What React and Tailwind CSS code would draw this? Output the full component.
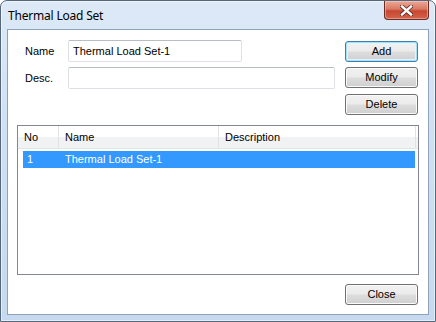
import React from "react";

function WinButton({ children, isDefault = false }) {
  return (
    <div
      className={
        "w-[73px] h-[21px] rounded-[3px] border flex items-center justify-center text-[11px] leading-none text-black bg-[linear-gradient(to_bottom,#f2f2f2_0%,#ebebeb_48%,#dddddd_52%,#cfcfcf_100%)] " +
        (isDefault
          ? "border-[#3c7fb1] shadow-[inset_0_0_0_1px_#a6e0f7,inset_0_0_0_2px_#e1f3fb]"
          : "border-[#707070] shadow-[inset_0_0_0_1px_#fbfbfb]")
      }
    >
      {children}
    </div>
  );
}

export default function App() {
  return (
    <div className="w-[436px] h-[322px] bg-white font-['Liberation_Sans',sans-serif] text-[11px] text-black">
      <div className="w-full h-full flex flex-col rounded-t-[7px] border border-[#55677d] bg-[linear-gradient(to_bottom,#dde9f7_0%,#cfe0f3_40%,#c6d9ef_100%)] shadow-[inset_0_0_0_1px_rgba(255,255,255,0.55)]">
        <div className="h-[28px] shrink-0 flex items-start justify-between">
          <div className="pl-[7px] pt-[7px] text-[12px] leading-[15px] font-['Noto_Sans',sans-serif] tracking-[-0.2px]">
            Thermal Load Set
          </div>
          <div className="mr-[6px] w-[45px] h-[19px] rounded-b-[4px] border border-t-0 border-[#6b2a22] bg-[linear-gradient(to_bottom,#e9a897_0%,#d97a64_45%,#c8462e_55%,#d2644b_100%)] shadow-[inset_0_0_0_1px_rgba(255,220,210,0.45)] flex items-center justify-center">
            <svg width="13" height="11" viewBox="0 0 13 11">
              <path
                d="M2 1.5 L11 9.5 M11 1.5 L2 9.5"
                stroke="#5a2a24"
                strokeWidth="4"
                strokeLinecap="square"
              />
              <path
                d="M2 1.5 L11 9.5 M11 1.5 L2 9.5"
                stroke="#ffffff"
                strokeWidth="2.4"
                strokeLinecap="square"
              />
            </svg>
          </div>
        </div>
        <div className="mx-[6px] mb-[6px] flex-1 border border-[#8ea2bb] bg-white flex flex-col px-[9px] pt-[10px]">
          <div className="flex justify-between items-start">
            <div className="flex flex-col gap-[5px]">
              <div className="flex items-center h-[22px]">
                <span className="w-[51px] pl-[8px]">Name</span>
                <div className="w-[174px] h-[22px] rounded-[2px] border border-[#dde1e6] border-t-[#b9bdc4] flex items-center pl-[4px]">
                  Thermal Load Set-1
                </div>
              </div>
              <div className="flex items-center h-[22px]">
                <span className="w-[51px] pl-[8px]">Desc.</span>
                <div className="w-[267px] h-[22px] rounded-[2px] border border-[#dde1e6] border-t-[#b9bdc4]"></div>
              </div>
            </div>
            <div className="flex flex-col pt-px mr-px">
              <WinButton isDefault>Add</WinButton>
              <div className="mt-[5px]">
                <WinButton>Modify</WinButton>
              </div>
              <div className="mt-[6px]">
                <WinButton>Delete</WinButton>
              </div>
            </div>
          </div>

          <div className="mt-[10px] h-[150px] border border-[#828790] flex flex-col">
            <div className="h-[23px] flex border-b border-[#e2e4e8] bg-[linear-gradient(to_bottom,#ffffff_0%,#ffffff_50%,#f1f2f4_51%,#f1f2f4_100%)]">
              <div className="w-[41px] border-r border-[#e0e2e6] flex items-center pl-[6px]">No</div>
              <div className="w-[160px] border-r border-[#e0e2e6] flex items-center pl-[6px]">Name</div>
              <div className="w-[197px] border-r border-[#e0e2e6] flex items-center pl-[6px]">Description</div>
            </div>
            <div className="mt-[2px] ml-[5px] mr-[3px] h-[17px] bg-[#3399ff] text-white flex items-center">
              <div className="w-[36px] pl-[4px]">1</div>
              <div className="pl-[6px]">Thermal Load Set-1</div>
            </div>
          </div>

          <div className="mt-[9px] self-end mr-px">
            <WinButton>Close</WinButton>
          </div>
        </div>
      </div>
    </div>
  );
}
